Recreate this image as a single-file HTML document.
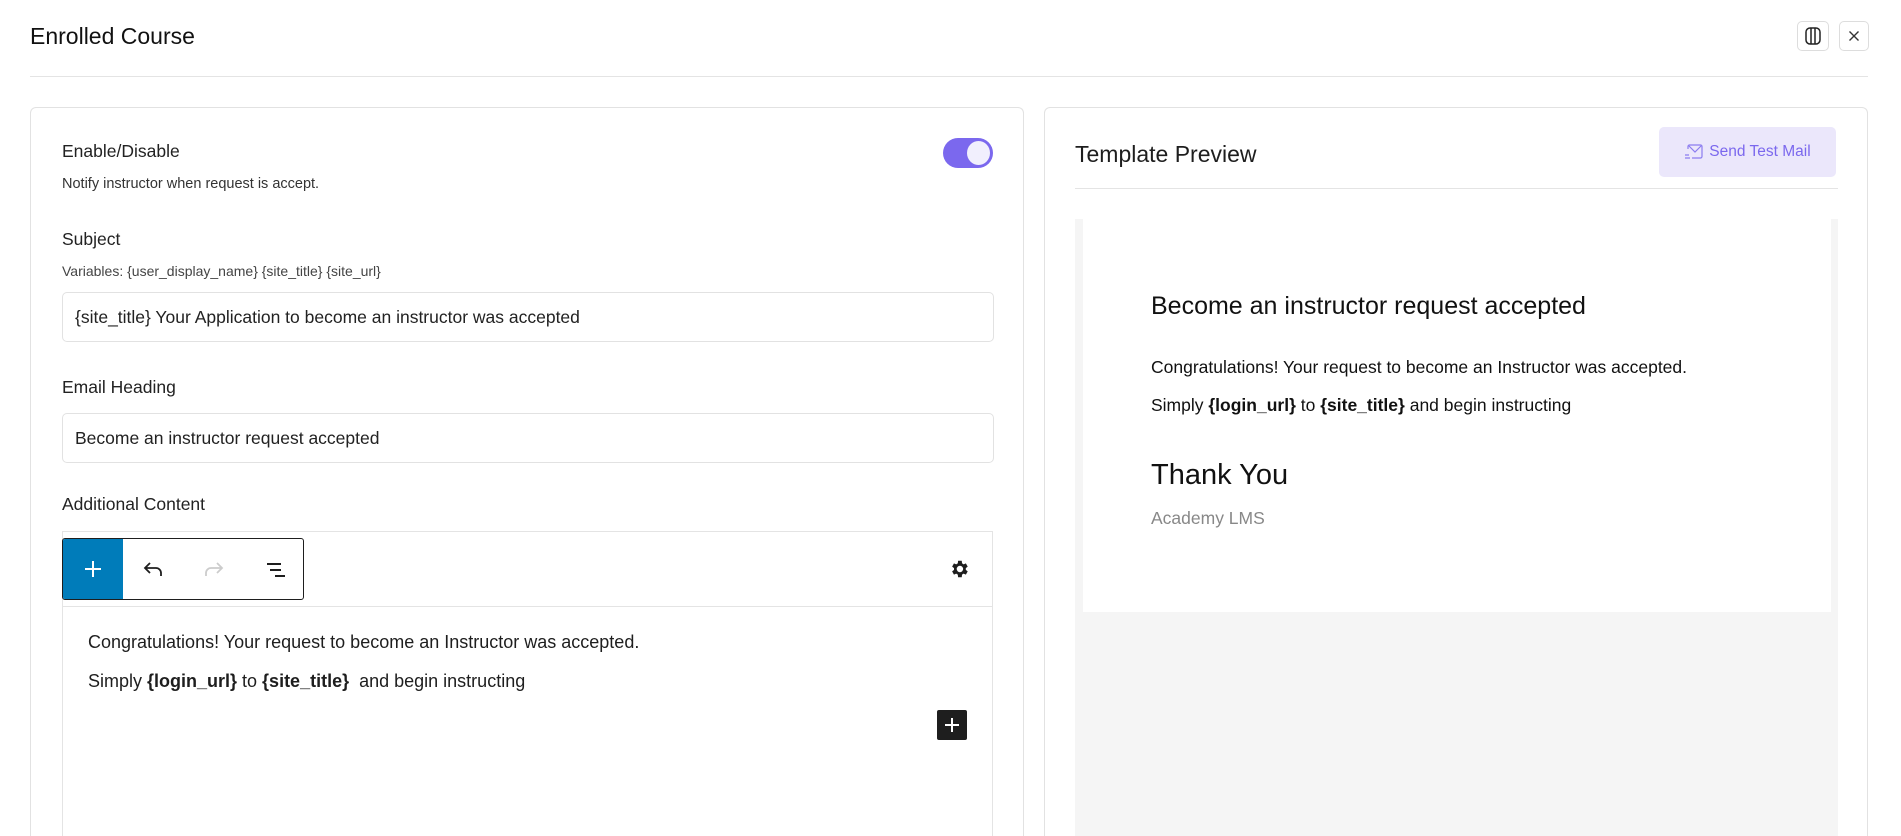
<!DOCTYPE html>
<html><head><meta charset="utf-8"><style>
*{box-sizing:border-box;margin:0;padding:0}
html,body{width:1901px;height:836px;overflow:hidden}
body{background:#fff;font-family:"Liberation Sans",sans-serif;color:#1e1e1e}
#w{position:relative;width:1901px;height:836px;overflow:hidden}
.a{position:absolute}
.t{position:absolute;white-space:nowrap}
.inp{position:absolute;left:62px;width:932px;border:1px solid #e2e2e2;border-radius:5px;background:#fff;font-size:17.5px;color:#222;padding-left:12px;display:flex;align-items:center}
.ib{position:absolute;border:1px solid #ddd;border-radius:5px;background:#fff}
</style></head><body><div id="w">
<div class="t" style="left:30px;top:23px;font-size:23px;color:#111">Enrolled Course</div>
<div class="ib" style="left:1797px;top:21px;width:32px;height:30px"><svg width="30" height="28" viewBox="0 0 30 28"><rect x="8" y="6" width="14" height="16" rx="4" fill="none" stroke="#222" stroke-width="1.5"/><line x1="13" y1="6" x2="13" y2="22" stroke="#222" stroke-width="1.5"/><line x1="17" y1="6" x2="17" y2="22" stroke="#222" stroke-width="1.5"/></svg></div>
<div class="ib" style="left:1839px;top:21px;width:30px;height:30px"><svg width="28" height="28" viewBox="0 0 28 28"><path d="M9.5 9.5l9 9M18.5 9.5l-9 9" stroke="#333" stroke-width="1.4"/></svg></div>
<div class="a" style="left:30px;top:76px;width:1838px;height:1px;background:#e4e4e4"></div>

<div class="a" style="left:30px;top:107px;width:994px;height:729px;border:1px solid #e2e2e2;border-bottom:none;border-radius:6px 6px 0 0"></div>
<div class="a" style="left:1044px;top:107px;width:824px;height:729px;border:1px solid #e2e2e2;border-bottom:none;border-radius:6px 6px 0 0"></div>

<div class="t" style="left:62px;top:141px;font-size:17.5px;color:#222">Enable/Disable</div>
<div class="a" style="left:943px;top:138px;width:50px;height:30px;border-radius:15px;background:#7b68ee"><div class="a" style="left:24px;top:3px;width:23px;height:24px;border-radius:50%;background:#f1effd"></div></div>
<div class="t" style="left:62px;top:176px;font-size:14.5px;color:#333">Notify instructor when request is accept.</div>
<div class="t" style="left:62px;top:229px;font-size:17.5px;color:#222">Subject</div>
<div class="t" style="left:62px;top:263px;font-size:14px;color:#444">Variables: {user_display_name} {site_title} {site_url}</div>
<div class="inp" style="top:292px;height:50px">{site_title} Your Application to become an instructor was accepted</div>
<div class="t" style="left:62px;top:377px;font-size:17.5px;color:#222">Email Heading</div>
<div class="inp" style="top:413px;height:50px">Become an instructor request accepted</div>
<div class="t" style="left:62px;top:494px;font-size:17.5px;color:#222">Additional Content</div>

<div class="a" style="left:62px;top:531px;width:931px;height:305px;border:1px solid #e4e4e4;border-bottom:none"></div>
<div class="a" style="left:62px;top:606px;width:931px;height:1px;background:#e4e4e4"></div>
<div class="a" style="left:62px;top:538px;width:242px;height:62px;border:1.5px solid #1e1e1e;border-radius:3px;overflow:hidden">
<div class="a" style="left:0;top:0;width:60px;height:60px;background:#007cba"><svg width="60" height="60"><path d="M30 22v16M22 30h16" stroke="#fff" stroke-width="2"/></svg></div>
<svg class="a" style="left:60px;top:0" width="180" height="60"><path d="M38 37v-3a5 5 0 0 0-5-5h-10M27 24l-5 5 5 5" fill="none" stroke="#1e1e1e" stroke-width="1.8"/><path d="M83 37v-3a5 5 0 0 1 5-5h10M94 24l5 5-5 5" fill="none" stroke="#ccc" stroke-width="1.8"/><path d="M144 25h14M147 31h11M152 37h10" stroke="#1e1e1e" stroke-width="2"/></svg>
</div>
<svg class="a" style="left:948px;top:558px" width="22" height="22" viewBox="0 0 24 24"><path fill="#1e1e1e" d="M19.4 13a7.5 7.5 0 0 0 0-2l2.1-1.6-2-3.5-2.5 1a7 7 0 0 0-1.7-1L15 3h-4l-.3 2.9a7 7 0 0 0-1.7 1l-2.5-1-2 3.5L6.6 11a7.5 7.5 0 0 0 0 2l-2.1 1.6 2 3.5 2.5-1a7 7 0 0 0 1.7 1L11 21h4l.3-2.9a7 7 0 0 0 1.7-1l2.5 1 2-3.5zM13 15.5a3.5 3.5 0 1 1 0-7 3.5 3.5 0 0 1 0 7z"/></svg>
<div class="t" style="left:88px;top:632px;font-size:18px;color:#1e1e1e">Congratulations! Your request to become an Instructor was accepted.</div>
<div class="t" style="left:88px;top:671px;font-size:18px;color:#1e1e1e">Simply <b>{login_url}</b> to <b>{site_title}</b> &nbsp;and begin instructing</div>
<div class="a" style="left:937px;top:710px;width:30px;height:30px;background:#1e1e1e;border-radius:2px"><svg width="30" height="30"><path d="M15 8v14M8 15h14" stroke="#fff" stroke-width="2"/></svg></div>

<div class="t" style="left:1075px;top:141px;font-size:23px;color:#1e1e1e">Template Preview</div>
<div class="a" style="left:1659px;top:127px;width:177px;height:50px;background:#ebe7fb;border-radius:5px;color:#7b68ee;font-size:15.5px;display:flex;align-items:center;justify-content:center;gap:5px"><svg width="20" height="18" viewBox="0 0 20 18"><path d="M4 6V3.5A1.5 1.5 0 0 1 5.5 2h11A1.5 1.5 0 0 1 18 3.5v10a1.5 1.5 0 0 1-1.5 1.5H8M5 3l6 6 6-6M1 12h4M1 15h5" fill="none" stroke="#8b7cf0" stroke-width="1.2"/></svg>Send Test Mail</div>
<div class="a" style="left:1075px;top:188px;width:763px;height:1px;background:#e4e4e4"></div>
<div class="a" style="left:1075px;top:219px;width:763px;height:617px;background:#f5f5f5"></div>
<div class="a" style="left:1083px;top:219px;width:748px;height:393px;background:#fff"></div>
<div class="t" style="left:1151px;top:292px;font-size:25px;color:#111">Become an instructor request accepted</div>
<div class="t" style="left:1151px;top:357px;font-size:17.5px;color:#111">Congratulations! Your request to become an Instructor was accepted.</div>
<div class="t" style="left:1151px;top:395px;font-size:17.5px;color:#111">Simply <b>{login_url}</b> to <b>{site_title}</b> and begin instructing</div>
<div class="t" style="left:1151px;top:459px;font-size:29px;color:#111">Thank You</div>
<div class="t" style="left:1151px;top:508px;font-size:17.5px;color:#888">Academy LMS</div>
</div></body></html>
